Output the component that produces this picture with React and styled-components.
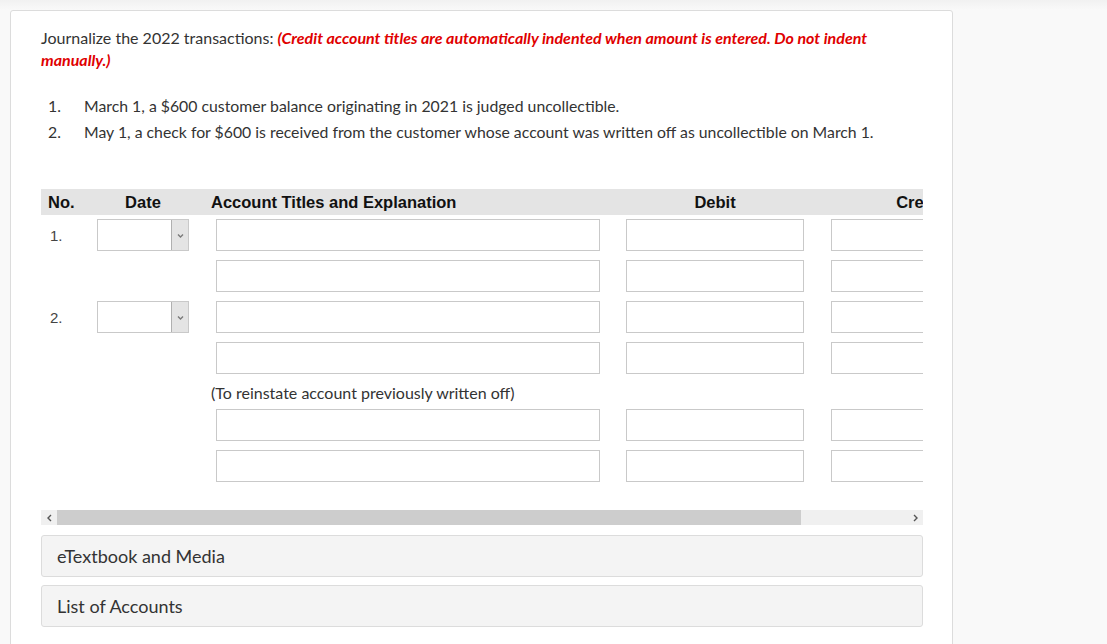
import styled, { createGlobalStyle } from 'styled-components'

const GlobalStyle = createGlobalStyle`
  html, body {
    margin: 0;
    padding: 0;
    background: #f9f9f9;
  }
  body {
    font-family: Lato, 'Noto Sans', sans-serif;
    color: #333;
  }
`

const columns = '56px 114px 415px 205px 178px'

const Page = styled.div`
  height: 644px;
  box-sizing: border-box;
  padding: 10px 0 0 10px;
  overflow: hidden;
  background: linear-gradient(#f1f1f1, #f9f9f9 10px);
`

const Card = styled.div`
  width: 943px;
  min-height: 700px;
  box-sizing: border-box;
  padding: 16px 29px 30px 30px;
  background: #fff;
  border: 1px solid #dcdcdc;
  border-radius: 3px;
`

const Prompt = styled.p`
  margin: 0;
  font-size: 16px;
  line-height: 22px;
  color: #333;
`

const Note = styled.strong`
  font-style: italic;
  font-weight: 700;
  color: #e00000;
`

const Steps = styled.ol`
  list-style: none;
  margin: 22px 0 0;
  padding: 0;
  font-size: 15.8px;
  line-height: 26px;
`

const Step = styled.li`
  display: flex;
`

const StepNo = styled.span`
  flex: none;
  width: 36px;
  padding-left: 7px;
`

const Journal = styled.div`
  width: 882px;
  margin-top: 44px;
  overflow: hidden;
`

const Sheet = styled.div`
  width: 968px;
`

const HeaderRow = styled.div`
  display: grid;
  grid-template-columns: ${columns};
  align-items: center;
  height: 26px;
  padding-top: 1px;
  box-sizing: border-box;
  background: #e4e4e4;
  font: bold 16.5px 'Liberation Sans', Arial, sans-serif;
  color: #111;
`

const HeadCell = styled.div`
  width: ${p => (p.$w ? `${p.$w}px` : 'auto')};
  padding-left: ${p => p.$pad || 0}px;
  text-align: ${p => p.$align || 'left'};
  white-space: nowrap;
`

const Body = styled.div`
  display: flex;
  flex-direction: column;
  gap: 9px;
  margin-top: 4px;
`

const Row = styled.div`
  display: grid;
  grid-template-columns: ${columns};
  align-items: center;
  height: 32px;
`

const RowNo = styled.div`
  padding-left: 9px;
  font: 15px 'Liberation Sans', Arial, sans-serif;
  color: #444;
`

const Field = styled.div`
  width: ${p => p.$w}px;
  height: 32px;
  margin-left: ${p => p.$offset || 0}px;
  box-sizing: border-box;
  border: 1px solid #c9c9c9;
  background: #fff;
`

const Select = styled.div`
  display: flex;
  width: 92px;
  height: 32px;
  box-sizing: border-box;
  border: 1px solid #c9c9c9;
  background: #fff;
`

const SelectButton = styled.div`
  display: flex;
  align-items: center;
  justify-content: center;
  width: 16px;
  margin-left: auto;
  background: #e4e4e4;
  border-left: 1px solid #b0b0b0;
`

const Explanation = styled.div`
  height: 17px;
  padding-left: 170px;
  font-size: 16px;
  line-height: 20px;
  color: #333;
`

const ScrollBar = styled.div`
  display: flex;
  width: 882px;
  height: 15px;
  margin-top: 28px;
  background: #f0f0f0;
`

const ScrollArrow = styled.div`
  display: flex;
  align-items: center;
  justify-content: center;
  width: 16px;
  flex: none;
  margin-left: ${p => (p.$end ? 'auto' : '0')};
`

const Thumb = styled.div`
  width: 744px;
  background: #cdcdcd;
`

const Panels = styled.div`
  display: flex;
  flex-direction: column;
  gap: 8px;
  margin-top: 10px;
`

const Panel = styled.div`
  display: flex;
  align-items: center;
  height: 42px;
  box-sizing: border-box;
  padding-left: 15px;
  background: #f4f4f4;
  border: 1px solid #dcdcdc;
  border-radius: 3px;
  font-size: 18px;
  color: #333;
`

const Chevron = ({ dir }) => {
  const d = {
    down: 'M1 1.5 L3.5 4 L6 1.5',
    left: 'M5 1 L2 4 L5 7',
    right: 'M2 1 L5 4 L2 7',
  }[dir]
  const size = dir === 'down' ? [7, 5] : [7, 8]
  return (
    <svg width={size[0]} height={size[1]} viewBox={`0 0 ${size[0]} ${size[1]}`}>
      <path d={d} fill="none" stroke={dir === 'down' ? '#7a7a7a' : '#555'} strokeWidth="1.4" />
    </svg>
  )
}

const DateSelect = () => (
  <Select>
    <SelectButton>
      <Chevron dir="down" />
    </SelectButton>
  </Select>
)

const EntryRow = ({ no }) => (
  <Row>
    <RowNo>{no ? `${no}.` : ''}</RowNo>
    <div>{no ? <DateSelect /> : null}</div>
    <Field $w={384} $offset={5} />
    <Field $w={178} />
    <Field $w={178} />
  </Row>
)

export default function App() {
  return (
    <Page>
      <GlobalStyle />
      <Card>
        <Prompt>
          Journalize the 2022 transactions:{' '}
          <Note>
            (Credit account titles are automatically indented when amount is entered. Do not indent manually.)
          </Note>
        </Prompt>
        <Steps>
          <Step>
            <StepNo>1.</StepNo>
            March 1, a $600 customer balance originating in 2021 is judged uncollectible.
          </Step>
          <Step>
            <StepNo>2.</StepNo>
            May 1, a check for $600 is received from the customer whose account was written off as uncollectible on March 1.
          </Step>
        </Steps>

        <Journal>
          <Sheet>
            <HeaderRow>
              <HeadCell $pad={7}>No.</HeadCell>
              <HeadCell $w={92} $align="center">Date</HeadCell>
              <HeadCell>Account Titles and Explanation</HeadCell>
              <HeadCell $w={178} $align="center">Debit</HeadCell>
              <HeadCell $w={178} $align="center">Credit</HeadCell>
            </HeaderRow>
            <Body>
              <EntryRow no={1} />
              <EntryRow />
              <EntryRow no={2} />
              <EntryRow />
              <Explanation>(To reinstate account previously written off)</Explanation>
              <EntryRow />
              <EntryRow />
            </Body>
          </Sheet>
        </Journal>

        <ScrollBar>
          <ScrollArrow>
            <Chevron dir="left" />
          </ScrollArrow>
          <Thumb />
          <ScrollArrow $end>
            <Chevron dir="right" />
          </ScrollArrow>
        </ScrollBar>

        <Panels>
          <Panel>eTextbook and Media</Panel>
          <Panel>List of Accounts</Panel>
        </Panels>
      </Card>
    </Page>
  )
}
